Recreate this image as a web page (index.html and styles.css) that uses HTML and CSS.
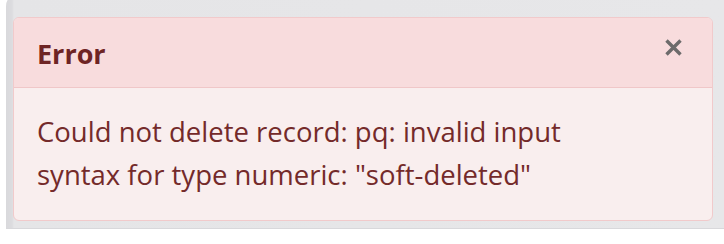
FILE: index.html
```html
<!DOCTYPE html>
<html>
<head>
<meta charset="utf-8">
<link rel="stylesheet" href="styles.css">
</head>
<body>
<div class="panel">
  <div class="card">
    <div class="card-header">
      <span class="title">Error</span>
      <button class="close" aria-label="Close">
        <svg width="21" height="21" viewBox="0 0 21 21"><path d="M3.5 3.5 L17.5 17.5 M17.5 3.5 L3.5 17.5" stroke="#6d6b6b" stroke-width="3.4" stroke-linecap="butt" fill="none"/></svg>
      </button>
    </div>
    <div class="card-body">
      <p class="message">Could not delete record: pq: invalid input syntax for type numeric: "soft-deleted"</p>
    </div>
  </div>
</div>
</body>
</html>
```
FILE: styles.css
```css
html, body {
  margin: 0;
  padding: 0;
  background: #ffffff;
  width: 724px;
  height: 244px;
  overflow: hidden;
  font-family: "Open Sans", "DejaVu Sans", sans-serif;
}
.panel {
  margin-left: 6px;
  margin-top: -6px;
  height: 235px;
  box-sizing: border-box;
  padding: 23px 11px 0 7px;
  background: linear-gradient(to right, #d9d9dc 0, #dcdcdf 6px, #e5e5e7 8px, #e7e7e9 100%);
  border-top-left-radius: 12px;
  border-bottom: 1px solid #d8d8db;
}
.card {
  width: 700px;
  box-sizing: border-box;
  border: 1px solid #f1cacb;
  border-radius: 6px;
  overflow: hidden;
  background: #f9eeee;
}
.card-header {
  height: 70px;
  box-sizing: border-box;
  background: #f8dcdd;
  border-bottom: 1px solid #f0c7c8;
  display: flex;
  align-items: center;
  justify-content: space-between;
  padding: 0 28px 0 23px;
}
.title {
  font-size: 27px;
  font-weight: 700;
  color: #6e2424;
  margin-top: 1px;
}
.close {
  border: 0;
  background: none;
  padding: 0;
  width: 21px;
  height: 21px;
  display: flex;
  margin-top: -11px;
}
.card-body {
  height: 132px;
  box-sizing: border-box;
  padding: 22px 23px 0 23px;
}
.message {
  margin: 0;
  font-size: 27.5px;
  line-height: 43px;
  color: #742a2a;
  max-width: 570px;
}
```
